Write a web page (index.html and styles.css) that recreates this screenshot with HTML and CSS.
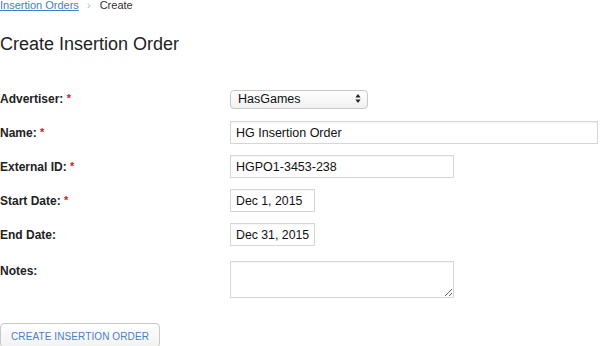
FILE: index.html
```html
<!doctype html>
<html lang="en">
  <head>
    <meta charset="UTF-8" />
    <title>Create Insertion Order</title>
    <link rel="stylesheet" href="styles.css">
  </head>
  <body>
    <!-- Breadcrumb -->
    <nav class="breadcrumb">
      <a href="#">Insertion Orders</a>
      <span class="crumb-sep">›</span>
      <span class="crumb-current">Create</span>
    </nav>

    <h1 class="page-title">Create Insertion Order</h1>

    <!-- Insertion order form -->
    <form class="io-form" onsubmit="return false">
      <div class="form-row">
        <label class="form-label" for="advertiser">Advertiser: <span class="req">*</span></label>
        <div class="select-wrap">
          <select id="advertiser" class="select-input">
            <option>HasGames</option>
          </select>
          <svg class="select-arrows" width="6" height="9" viewBox="0 0 6 9">
            <path d="M3 0 L5.6 3.4 H0.4 Z" fill="#222" />
            <path d="M3 9 L5.6 5.6 H0.4 Z" fill="#222" />
          </svg>
        </div>
      </div>

      <div class="form-row">
        <label class="form-label" for="name">Name: <span class="req">*</span></label>
        <input id="name" class="text-input wide" type="text" value="HG Insertion Order" />
      </div>

      <div class="form-row">
        <label class="form-label" for="external-id">External ID: <span class="req">*</span></label>
        <input id="external-id" class="text-input medium" type="text" value="HGPO1-3453-238" />
      </div>

      <div class="form-row">
        <label class="form-label" for="start-date">Start Date: <span class="req">*</span></label>
        <input id="start-date" class="text-input date" type="text" value="Dec 1, 2015" />
      </div>

      <div class="form-row">
        <label class="form-label" for="end-date">End Date:</label>
        <input id="end-date" class="text-input date" type="text" value="Dec 31, 2015" />
      </div>

      <div class="form-row notes-row">
        <label class="form-label" for="notes">Notes:</label>
        <textarea id="notes" class="text-input notes"></textarea>
      </div>

      <button type="submit" class="submit-btn">Create Insertion Order</button>
    </form>
  </body>
</html>
```

FILE: styles.css
```css
/* Page */
body {
  margin: 0;
  font-family: "Liberation Sans", Arial, sans-serif;
  color: #222;
  background: #fff;
}

/* Breadcrumb */
.breadcrumb {
  font-size: 11px;
  line-height: 11px;
  height: 11px;
  color: #333;
}

.breadcrumb a {
  color: #3f7fc3;
  text-decoration: underline;
}

.crumb-sep {
  color: #b8b8b8;
  margin: 0 6px 0 5px;
}

.page-title {
  font-size: 18px;
  line-height: 22px;
  font-weight: normal;
  color: #222;
  margin: 22px 0 32px;
}

/* Form layout */
.form-row {
  display: grid;
  grid-template-columns: 230px 1fr;
  align-items: center;
  height: 23px;
  margin-bottom: 11px;
}

.form-label {
  font-size: 12px;
  font-weight: bold;
  color: #222;
}

.req {
  color: #e8101a;
  font-size: 11px;
  vertical-align: 1px;
}

.notes-row {
  align-items: start;
  height: 37px;
  margin-top: 15px;
  margin-bottom: 25px;
}

.notes-row .form-label {
  padding-top: 3px;
}

/* Inputs */
.text-input {
  box-sizing: border-box;
  height: 23px;
  margin: 0;
  padding: 0 2px 0 5px;
  border: 1px solid #d6d6d6;
  border-radius: 0;
  font-family: "Liberation Sans", Arial, sans-serif;
  font-size: 12.5px;
  color: #111;
  background: #fff;
  box-shadow: inset 0 1px 1px rgba(0, 0, 0, 0.04);
  outline: none;
}

.wide {
  width: 368px;
}

.medium {
  width: 224px;
}

.date {
  width: 85px;
  font-size: 12.3px;
}

.notes {
  width: 224px;
  height: 37px;
  resize: both;
}

/* Mac style select */
.select-wrap {
  position: relative;
  width: 138px;
  height: 19px;
}

.select-input {
  appearance: none;
  -webkit-appearance: none;
  box-sizing: border-box;
  width: 138px;
  height: 19px;
  margin: 0;
  padding: 0 0 0 7px;
  border: 1px solid #c8c8c8;
  border-radius: 4px;
  background: linear-gradient(#ffffff, #f1f1f1);
  font-family: "Liberation Sans", Arial, sans-serif;
  font-size: 12.5px;
  color: #111;
  outline: none;
}

.select-arrows {
  position: absolute;
  right: 7px;
  top: 5px;
  pointer-events: none;
}

/* Submit button */
.submit-btn {
  box-sizing: border-box;
  width: 160px;
  height: 25px;
  padding: 2px 0 0;
  border: 1px solid #c9c9c9;
  border-radius: 4px;
  background: linear-gradient(#ffffff, #f2f2f2);
  color: #4b80c4;
  font-family: "Liberation Sans", Arial, sans-serif;
  font-size: 10px;
  letter-spacing: 0.1px;
  text-transform: uppercase;
  cursor: pointer;
}

.submit-btn:hover {
  background: #f2f2f2;
}
```
